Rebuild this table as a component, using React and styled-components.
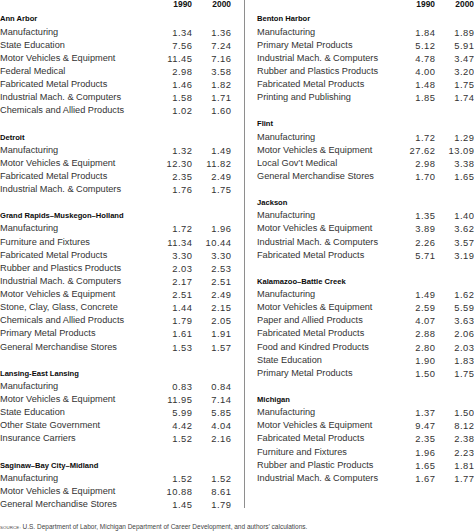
import React from "react"
import styled, { createGlobalStyle } from "styled-components"

const GlobalStyle = createGlobalStyle`
  html, body {
    margin: 0;
    padding: 0;
    background: #ffffff;
  }
  body {
    font-family: "Liberation Sans", Arial, sans-serif;
    color: #333;
    overflow: hidden;
  }
`

const LINE = 13.14

const Page = styled.div`
  width: 474px;
  height: 531px;
  overflow: hidden;
`

const Columns = styled.div`
  display: grid;
  grid-template-columns: 244px 1fr;
`

const Column = styled.div`
  padding: ${p => (p.$right ? "0 0 0 12px" : "0 13px 0 0")};
  border-left: ${p => (p.$right ? "1px solid #8e8e8e" : "none")};
  margin-bottom: ${p => (p.$right ? "3px" : "0")};
`

const Row = styled.div`
  display: grid;
  grid-template-columns: 1fr 39px 39px;
  height: ${LINE}px;
  line-height: ${LINE}px;
  font-size: 9.2px;
  white-space: nowrap;
`

const YearRow = styled(Row)`
  height: 8px;
  line-height: 8px;
  font-size: 8.4px;
  font-weight: bold;
  color: #111;
  margin-bottom: 4.4px;
`

const Label = styled.div`
  overflow: visible;
`

const Num = styled.div`
  text-align: right;
  font-size: ${p => (p.$head ? "8.4px" : "9.4px")};
  letter-spacing: ${p => (p.$head ? "0" : "0.5px")};
  margin-right: ${p => (p.$head ? "0" : "-0.5px")};
`

const Section = styled.div`
  margin-bottom: ${LINE}px;

  &:last-child {
    margin-bottom: 0;
  }
`

const Heading = styled.div`
  height: ${LINE}px;
  line-height: ${LINE}px;
  font-size: 7.6px;
  font-weight: bold;
  color: #0a0a0a;
  white-space: nowrap;
`

const Source = styled.div`
  margin-top: 12px;
  font-size: 6.5px;
  line-height: 7px;
  color: #444;
  white-space: nowrap;

  span {
    font-size: 4.4px;
    text-transform: uppercase;
    letter-spacing: 0.1px;
  }
`

const left = [
  {
    name: "Ann Arbor",
    rows: [
      ["Manufacturing", "1.34", "1.36"],
      ["State Education", "7.56", "7.24"],
      ["Motor Vehicles & Equipment", "11.45", "7.16"],
      ["Federal Medical", "2.98", "3.58"],
      ["Fabricated Metal Products", "1.46", "1.82"],
      ["Industrial Mach. & Computers", "1.58", "1.71"],
      ["Chemicals and Allied Products", "1.02", "1.60"],
    ],
  },
  {
    name: "Detroit",
    rows: [
      ["Manufacturing", "1.32", "1.49"],
      ["Motor Vehicles & Equipment", "12.30", "11.82"],
      ["Fabricated Metal Products", "2.35", "2.49"],
      ["Industrial Mach. & Computers", "1.76", "1.75"],
    ],
  },
  {
    name: "Grand Rapids–Muskegon–Holland",
    rows: [
      ["Manufacturing", "1.72", "1.96"],
      ["Furniture and Fixtures", "11.34", "10.44"],
      ["Fabricated Metal Products", "3.30", "3.30"],
      ["Rubber and Plastics Products", "2.03", "2.53"],
      ["Industrial Mach. & Computers", "2.17", "2.51"],
      ["Motor Vehicles & Equipment", "2.51", "2.49"],
      ["Stone, Clay, Glass, Concrete", "1.44", "2.15"],
      ["Chemicals and Allied Products", "1.79", "2.05"],
      ["Primary Metal Products", "1.61", "1.91"],
      ["General Merchandise Stores", "1.53", "1.57"],
    ],
  },
  {
    name: "Lansing-East Lansing",
    rows: [
      ["Manufacturing", "0.83", "0.84"],
      ["Motor Vehicles & Equipment", "11.95", "7.14"],
      ["State Education", "5.99", "5.85"],
      ["Other State Government", "4.42", "4.04"],
      ["Insurance Carriers", "1.52", "2.16"],
    ],
  },
  {
    name: "Saginaw–Bay City–Midland",
    rows: [
      ["Manufacturing", "1.52", "1.52"],
      ["Motor Vehicles & Equipment", "10.88", "8.61"],
      ["General Merchandise Stores", "1.45", "1.79"],
    ],
  },
]

const right = [
  {
    name: "Benton Harbor",
    rows: [
      ["Manufacturing", "1.84", "1.89"],
      ["Primary Metal Products", "5.12", "5.91"],
      ["Industrial Mach. & Computers", "4.78", "3.47"],
      ["Rubber and Plastics Products", "4.00", "3.20"],
      ["Fabricated Metal Products", "1.48", "1.75"],
      ["Printing and Publishing", "1.85", "1.74"],
    ],
  },
  {
    name: "Flint",
    rows: [
      ["Manufacturing", "1.72", "1.29"],
      ["Motor Vehicles & Equipment", "27.62", "13.09"],
      ["Local Gov’t Medical", "2.98", "3.38"],
      ["General Merchandise Stores", "1.70", "1.65"],
    ],
  },
  {
    name: "Jackson",
    rows: [
      ["Manufacturing", "1.35", "1.40"],
      ["Motor Vehicles & Equipment", "3.89", "3.62"],
      ["Industrial Mach. & Computers", "2.26", "3.57"],
      ["Fabricated Metal Products", "5.71", "3.19"],
    ],
  },
  {
    name: "Kalamazoo–Battle Creek",
    rows: [
      ["Manufacturing", "1.49", "1.62"],
      ["Motor Vehicles & Equipment", "2.59", "5.59"],
      ["Paper and Allied Products", "4.07", "3.63"],
      ["Fabricated Metal Products", "2.88", "2.06"],
      ["Food and Kindred Products", "2.80", "2.03"],
      ["State Education", "1.90", "1.83"],
      ["Primary Metal Products", "1.50", "1.75"],
    ],
  },
  {
    name: "Michigan",
    rows: [
      ["Manufacturing", "1.37", "1.50"],
      ["Motor Vehicles & Equipment", "9.47", "8.12"],
      ["Fabricated Metal Products", "2.35", "2.38"],
      ["Furniture and Fixtures", "1.96", "2.23"],
      ["Rubber and Plastic Products", "1.65", "1.81"],
      ["Industrial Mach. & Computers", "1.67", "1.77"],
    ],
  },
]

const TableColumn = ({ sections, right: isRight }) => (
  <Column $right={isRight}>
    <YearRow>
      <Label />
      <Num $head>1990</Num>
      <Num $head>2000</Num>
    </YearRow>
    {sections.map(section => (
      <Section key={section.name}>
        <Heading>{section.name}</Heading>
        {section.rows.map((r, ind) => (
          <Row key={ind}>
            <Label>{r[0]}</Label>
            <Num>{r[1]}</Num>
            <Num>{r[2]}</Num>
          </Row>
        ))}
      </Section>
    ))}
  </Column>
)

const App = () => {
  return (
    <Page>
      <GlobalStyle />
      <Columns>
        <TableColumn sections={left} />
        <TableColumn sections={right} right />
      </Columns>
      <Source>
        <span>Source:</span> U.S. Department of Labor, Michigan Department of
        Career Development, and authors’ calculations.
      </Source>
    </Page>
  )
}

export default App
